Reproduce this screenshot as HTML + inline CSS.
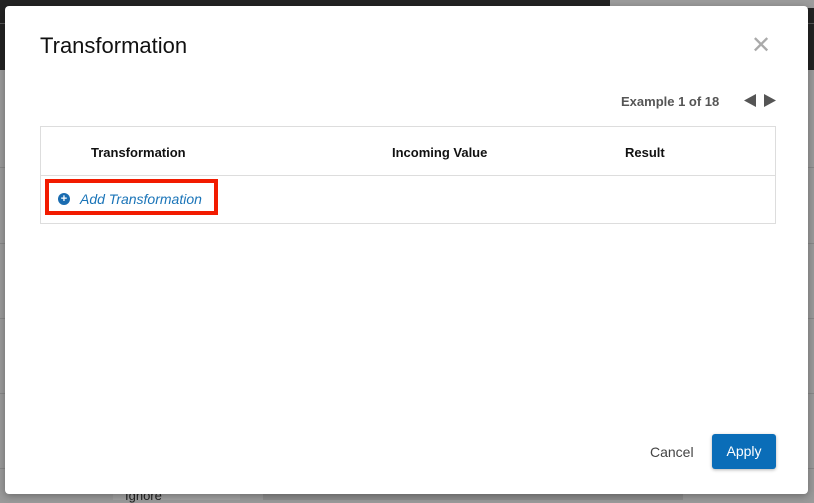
<!DOCTYPE html>
<html><head><style>
body{margin:0;width:814px;height:500px;position:relative;overflow:hidden;background:#9a9a9a;font-family:"Liberation Sans",sans-serif}
.bg{position:absolute}
.modal{position:absolute;left:5px;top:6px;width:803px;height:488px;background:#fff;border-radius:4px;box-shadow:0 2px 8px rgba(0,0,0,.3)}
.title{position:absolute;left:35px;top:27px;font-size:22px;color:#111}
.close{position:absolute;left:746px;top:28px;font-size:24px;color:#aaa;line-height:1}
.ex{position:absolute;left:616px;top:88px;font-size:13px;font-weight:bold;color:#555}
.tbl{position:absolute;left:35px;top:120px;width:734px;height:96px;border:1px solid #ddd}
.row{position:absolute;left:0;top:48px;width:734px;border-top:1px solid #ddd}
.th{position:absolute;top:18px;font-size:13px;font-weight:bold;color:#111}
.hl{position:absolute;left:4px;top:52px;width:173px;height:36px;border:4px solid #f21b00;box-sizing:border-box}
.add{position:absolute;left:39px;top:64px;font-size:14px;font-style:italic;color:#1a74b8}
.dot{position:absolute;left:17px;top:66px;width:12px;height:12px;border-radius:50%;background:#1a6cb0;color:#fff;font-size:11px;font-weight:bold;line-height:12px;text-align:center;font-style:normal}
.cancel{position:absolute;left:645px;top:438px;font-size:14px;color:#444}
.apply{position:absolute;left:707px;top:428px;width:64px;height:35px;background:#0a6db8;border-radius:3px;color:#fff;font-size:14px;text-align:center;line-height:35px;box-shadow:0 1px 3px rgba(0,0,0,.3)}
</style></head><body>
<div class="bg" style="left:0;top:0;width:814px;height:70px;background:#232323"></div>
<div class="bg" style="left:610px;top:0;width:204px;height:8px;background:#9c9c9c"></div>
<div class="bg" style="left:0;top:23px;width:814px;height:1px;background:#555"></div>
<div class="bg" style="left:0;top:167px;width:814px;height:1px;background:#888"></div>
<div class="bg" style="left:0;top:243px;width:814px;height:1px;background:#888"></div>
<div class="bg" style="left:0;top:318px;width:814px;height:1px;background:#888"></div>
<div class="bg" style="left:0;top:393px;width:814px;height:1px;background:#888"></div>
<div class="bg" style="left:0;top:468px;width:814px;height:1px;background:#888"></div>
<div class="bg" style="left:113px;top:480px;width:127px;height:20px;background:#a2a2a2"></div>
<div class="bg" style="left:263px;top:480px;width:420px;height:20px;background:#8c8c8c"></div>
<div class="bg" style="left:125px;top:488px;font-size:13px;color:#222">Ignore</div>
<div class="modal">
<div class="title">Transformation</div>
<div class="close">✕</div>
<div class="ex">Example 1 of 18</div>
<svg style="position:absolute;left:738px;top:87px" width="36" height="16"><path d="M13 1 L13 14 L1 7.5Z" fill="#555"/><path d="M21 1 L21 14 L33 7.5Z" fill="#555"/></svg>
<div class="tbl">
<div class="th" style="left:50px">Transformation</div>
<div class="th" style="left:351px">Incoming Value</div>
<div class="th" style="left:584px">Result</div>
<div class="row"></div>
<div class="hl"></div>
<div class="dot">+</div>
<div class="add">Add Transformation</div>
</div>
<div class="cancel">Cancel</div>
<div class="apply">Apply</div>
</div>
</body></html>
